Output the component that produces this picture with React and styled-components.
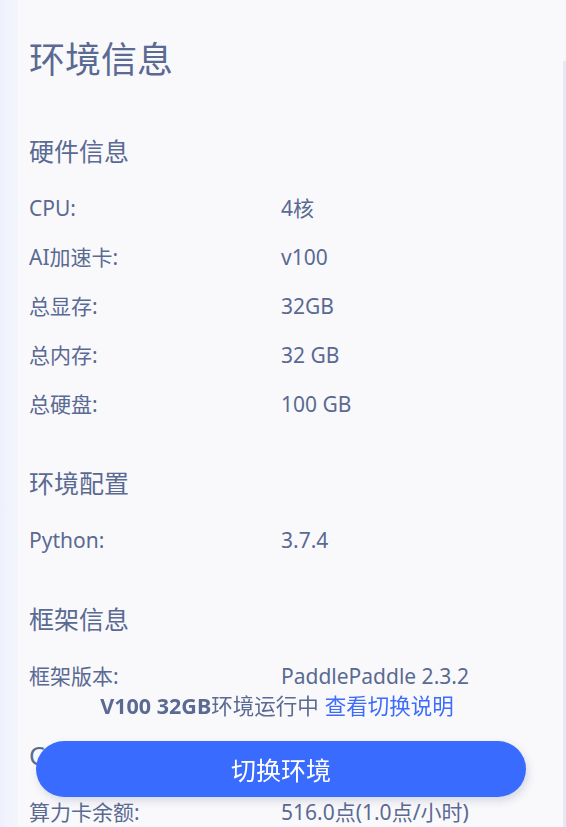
import React from "react";
import styled, { createGlobalStyle } from "styled-components";

const GlobalStyle = createGlobalStyle`
  html, body {
    margin: 0;
    padding: 0;
    height: 100%;
    overflow: hidden;
    background: #f3f5fc;
    font-family: "Noto Sans", "Noto Sans CJK SC", sans-serif;
  }
  #root { height: 100%; }
  * { box-sizing: border-box; }
`;

const Page = styled.div`
  display: flex;
  height: 100vh;
  overflow: hidden;
`;

const EdgeShade = styled.div`
  width: 18px;
  flex: none;
  background: linear-gradient(90deg, #eef1fc 0%, #f4f6fd 100%);
`;

const Panel = styled.main`
  flex: 1;
  background: #f9f9fc;
  padding: 36px 11px 0;
  color: #5a6a92;
  overflow: hidden;
`;

const ScrollTrack = styled.div`
  width: 3px;
  flex: none;
  display: flex;
  flex-direction: column;
  background: #f7f8fc;
`;

const ScrollThumb = styled.div`
  margin-top: 61px;
  flex: 1;
  background: #e6e8f3;
`;

const Title = styled.h1`
  margin: 0 0 13px;
  font-size: 36px;
  line-height: 48px;
  font-weight: 400;
`;

const Section = styled.section`
  padding-top: 37px;
`;

const Heading = styled.h2`
  margin: 0 0 16px;
  font-size: 25px;
  line-height: 34px;
  font-weight: 400;
`;

const Row = styled.div`
  display: grid;
  grid-template-columns: 252px 1fr;
  font-size: 21px;
  line-height: 49px;
  white-space: nowrap;
`;

const Footer = styled.div`
  position: fixed;
  left: 36px;
  width: 490px;
  bottom: 30px;
  display: flex;
  flex-direction: column;
  align-items: center;
  gap: 20px;
`;

const Status = styled.p`
  margin: 0 8px 0 0;
  font-size: 21.5px;
  line-height: 30px;
  color: #5a6a92;
  white-space: nowrap;
`;

const Strong = styled.b`
  font-weight: 700;
`;

const Link = styled.a`
  color: #3d6cfd;
  text-decoration: none;
  margin-left: 6px;
  cursor: pointer;
`;

const SwitchButton = styled.button`
  width: 100%;
  height: 56px;
  border: none;
  border-radius: 28px;
  background: #396bff;
  color: #ffffff;
  font-family: inherit;
  font-size: 25px;
  box-shadow: 2px 4px 8px rgba(60, 70, 110, 0.18);
  cursor: pointer;
`;

const sections = [
  {
    title: "硬件信息",
    rows: [
      ["CPU:", "4核"],
      ["AI加速卡:", "v100"],
      ["总显存:", "32GB"],
      ["总内存:", "32 GB"],
      ["总硬盘:", "100 GB"],
    ],
  },
  { title: "环境配置", rows: [["Python:", "3.7.4"]] },
  { title: "框架信息", rows: [["框架版本:", "PaddlePaddle 2.3.2"]] },
  { title: "Credits", rows: [["算力卡余额:", "516.0点(1.0点/小时)"]] },
];

export default function App() {
  return (
    <>
      <GlobalStyle />
      <Page>
        <EdgeShade />
        <Panel>
          <Title>环境信息</Title>
          {sections.map((s) => (
            <Section key={s.title}>
              <Heading>{s.title}</Heading>
              {s.rows.map(([label, value]) => (
                <Row key={label}>
                  <span>{label}</span>
                  <span>{value}</span>
                </Row>
              ))}
            </Section>
          ))}
        </Panel>
        <ScrollTrack>
          <ScrollThumb />
        </ScrollTrack>
      </Page>
      <Footer>
        <Status>
          <Strong>V100 32GB</Strong>环境运行中
          <Link>查看切换说明</Link>
        </Status>
        <SwitchButton>切换环境</SwitchButton>
      </Footer>
    </>
  );
}
